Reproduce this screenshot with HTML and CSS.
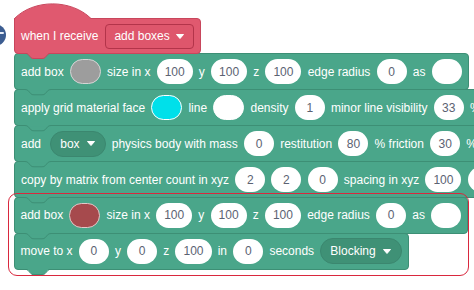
FILE: index.html
```html
<!DOCTYPE html>
<html lang="en">
<head>
    <meta charset="UTF-8">
    <title>Script</title>
    <link rel="stylesheet" href="styles.css">
</head>
<body>
    <div class="zoom-btn"><span class="dash"></span></div>

    <div class="script">
        <div class="hat">
            <svg class="hat-cap" width="78" height="17" viewBox="0 0 78 17">
                <path class="cap-fill" d="M0.5,17 L0.5,15.5 C20,-4 57,-4 77,15.5 L77,17 Z"/>
                <path class="cap-line" d="M0.5,17 L0.5,15.5 C20,-4 57,-4 77,15.5"/>
            </svg>
            <span>when I receive</span>
            <div class="hat-menu">add boxes <svg class="arrow" width="8" height="5" viewBox="0 0 8 5"><path d="M0.5,0.5 H7.5 L4,4.5 Z"/></svg></div>
            <svg class="tab red-tab" width="26" height="6" viewBox="0 0 26 6">
                <path class="tab-fill" d="M0,0 C1.5,0 2.5,0.4 3.2,1.2 L5.8,4.2 C6.5,5 7.5,5.4 9,5.4 H17 C18.5,5.4 19.5,5 20.2,4.2 L22.8,1.2 C23.5,0.4 24.5,0 26,0 Z"/>
                <path class="tab-line" d="M0,0.3 C1.5,0.3 2.5,0.7 3.2,1.5 L5.8,4.5 C6.5,5.3 7.5,5.5 9,5.5 H17 C18.5,5.5 19.5,5.3 20.2,4.5 L22.8,1.5 C23.5,0.7 24.5,0.3 26,0.3"/>
            </svg>
        </div>

        <div class="block">
            <span>add box</span>
            <span class="swatch gray"></span>
            <span>size in x</span>
            <span class="num">100</span>
            <span>y</span>
            <span class="num">100</span>
            <span>z</span>
            <span class="num">100</span>
            <span>edge radius</span>
            <span class="num">0</span>
            <span>as</span>
            <span class="num"></span>
        </div>

        <div class="block">
            <svg class="notch" width="26" height="7" viewBox="0 0 26 7"><rect class="notch-fill" x="0" y="0" width="26" height="1.2"/><path class="notch-line" d="M0,0.5 C1.5,0.5 2.5,0.9 3.2,1.7 L5.8,4.7 C6.5,5.5 7.5,5.8 9,5.8 H17 C18.5,5.8 19.5,5.5 20.2,4.7 L22.8,1.7 C23.5,0.9 24.5,0.5 26,0.5"/></svg>
            <span>apply grid material face</span>
            <span class="swatch cyan"></span>
            <span>line</span>
            <span class="swatch white"></span>
            <span>density</span>
            <span class="num">1</span>
            <span>minor line visibility</span>
            <span class="num">33</span>
            <span>%</span>
        </div>

        <div class="block">
            <svg class="notch" width="26" height="7" viewBox="0 0 26 7"><rect class="notch-fill" x="0" y="0" width="26" height="1.2"/><path class="notch-line" d="M0,0.5 C1.5,0.5 2.5,0.9 3.2,1.7 L5.8,4.7 C6.5,5.5 7.5,5.8 9,5.8 H17 C18.5,5.8 19.5,5.5 20.2,4.7 L22.8,1.7 C23.5,0.9 24.5,0.5 26,0.5"/></svg>
            <span>add</span>
            <div class="menu wide">box <svg class="arrow" width="8" height="5" viewBox="0 0 8 5"><path d="M0.5,0.5 H7.5 L4,4.5 Z"/></svg></div>
            <span>physics body with mass</span>
            <span class="num">0</span>
            <span>restitution</span>
            <span class="num">80</span>
            <span>% friction</span>
            <span class="num">30</span>
            <span>%</span>
        </div>

        <div class="block">
            <svg class="notch" width="26" height="7" viewBox="0 0 26 7"><rect class="notch-fill" x="0" y="0" width="26" height="1.2"/><path class="notch-line" d="M0,0.5 C1.5,0.5 2.5,0.9 3.2,1.7 L5.8,4.7 C6.5,5.5 7.5,5.8 9,5.8 H17 C18.5,5.8 19.5,5.5 20.2,4.7 L22.8,1.7 C23.5,0.9 24.5,0.5 26,0.5"/></svg>
            <span>copy by matrix from center count in xyz</span>
            <span class="num">2</span>
            <span class="num">2</span>
            <span class="num">0</span>
            <span>spacing in xyz</span>
            <span class="num">100</span>
            <span class="num"></span>
        </div>

        <div class="selected">
            <div class="block">
                <svg class="notch" width="26" height="7" viewBox="0 0 26 7"><rect class="notch-fill" x="0" y="0" width="26" height="1.2"/><path class="notch-line" d="M0,0.5 C1.5,0.5 2.5,0.9 3.2,1.7 L5.8,4.7 C6.5,5.5 7.5,5.8 9,5.8 H17 C18.5,5.8 19.5,5.5 20.2,4.7 L22.8,1.7 C23.5,0.9 24.5,0.5 26,0.5"/></svg>
                <span>add box</span>
                <span class="swatch maroon"></span>
                <span>size in x</span>
                <span class="num">100</span>
                <span>y</span>
                <span class="num">100</span>
                <span>z</span>
                <span class="num">100</span>
                <span>edge radius</span>
                <span class="num">0</span>
                <span>as</span>
                <span class="num"></span>
            </div>

            <div class="block">
                <svg class="notch" width="26" height="7" viewBox="0 0 26 7"><rect class="notch-fill" x="0" y="0" width="26" height="1.2"/><path class="notch-line" d="M0,0.5 C1.5,0.5 2.5,0.9 3.2,1.7 L5.8,4.7 C6.5,5.5 7.5,5.8 9,5.8 H17 C18.5,5.8 19.5,5.5 20.2,4.7 L22.8,1.7 C23.5,0.9 24.5,0.5 26,0.5"/></svg>
                <span>move to x</span>
                <span class="num">0</span>
                <span>y</span>
                <span class="num">0</span>
                <span>z</span>
                <span class="num">100</span>
                <span>in</span>
                <span class="num">0</span>
                <span>seconds</span>
                <div class="menu">Blocking <svg class="arrow" width="8" height="5" viewBox="0 0 8 5"><path d="M0.5,0.5 H7.5 L4,4.5 Z"/></svg></div>
                <svg class="tab green-tab" width="26" height="6" viewBox="0 0 26 6">
                    <path class="tab-fill" d="M0,0 C1.5,0 2.5,0.4 3.2,1.2 L5.8,4.2 C6.5,5 7.5,5.4 9,5.4 H17 C18.5,5.4 19.5,5 20.2,4.2 L22.8,1.2 C23.5,0.4 24.5,0 26,0 Z"/>
                    <path class="tab-line" d="M0,0.3 C1.5,0.3 2.5,0.7 3.2,1.5 L5.8,4.5 C6.5,5.3 7.5,5.5 9,5.5 H17 C18.5,5.5 19.5,5.3 20.2,4.5 L22.8,1.5 C23.5,0.7 24.5,0.3 26,0.3"/>
                </svg>
            </div>
        </div>
    </div>
</body>
</html>
```

FILE: styles.css
```css
body {
    margin: 0;
    background: #ffffff;
    font-family: 'Liberation Sans', Arial, sans-serif;
    font-size: 12px;
    overflow: hidden;
    height: 290px;
    position: relative;
}

.zoom-btn {
    position: absolute;
    left: -16px;
    top: 24px;
    width: 22px;
    height: 22px;
    border-radius: 50%;
    background: #3c5d91;
}

.dash {
    position: absolute;
    left: 14px;
    top: 8px;
    width: 6px;
    height: 2px;
    border-radius: 1px;
    background: #e8eef8;
}

.script {
    padding: 18px 0 0 14px;
}

/* event hat */
.hat {
    position: relative;
    z-index: 1;
    display: flex;
    align-items: center;
    gap: 7px;
    width: max-content;
    height: 36px;
    box-sizing: border-box;
    padding: 0 6px 0 6px;
    background: #e0596f;
    border: 1px solid #c8465c;
    border-radius: 0 4px 4px 4px;
    color: #ffffff;
}

.hat-cap {
    position: absolute;
    left: -1px;
    top: -16px;
}

.cap-fill {
    fill: #e0596f;
}

.cap-line {
    fill: none;
    stroke: #c8465c;
    stroke-width: 1;
}

.hat-menu {
    display: flex;
    align-items: center;
    gap: 6px;
    height: 25px;
    box-sizing: border-box;
    padding: 0 9px 0 8px;
    border: 1.5px solid #b3344a;
    border-radius: 4px;
    background: #de566c;
}

.arrow path {
    fill: #ffffff;
    stroke: #ffffff;
    stroke-width: 1;
    stroke-linejoin: round;
}

.tab {
    position: absolute;
    left: 10px;
    top: 100%;
}

.red-tab .tab-fill {
    fill: #e0596f;
}

.red-tab .tab-line {
    fill: none;
    stroke: #c8465c;
}

/* stack blocks */
.block {
    position: relative;
    display: flex;
    align-items: center;
    gap: 6.2px;
    width: max-content;
    height: 37px;
    box-sizing: border-box;
    margin-top: -1px;
    padding: 0 6px 0 6px;
    background: #4aa68a;
    border: 1px solid #3d8f75;
    border-radius: 4px;
    color: #ffffff;
    white-space: nowrap;
}

.notch {
    position: absolute;
    left: 10px;
    top: -1px;
}

.notch-fill {
    fill: #4aa68a;
}

.notch-line {
    fill: none;
    stroke: #3d8f75;
    stroke-width: 1;
}

.green-tab .tab-fill {
    fill: #4aa68a;
}

.green-tab .tab-line {
    fill: none;
    stroke: #3d8f75;
}

.num {
    display: inline-flex;
    align-items: center;
    justify-content: center;
    min-width: 30px;
    height: 25px;
    box-sizing: border-box;
    padding: 0 8px;
    border-radius: 13px;
    background: #ffffff;
    color: #5b6272;
}

.swatch {
    display: inline-block;
    width: 31px;
    height: 25px;
    box-sizing: border-box;
    border-radius: 13px;
    border: 1.5px solid #ffffff;
}

.swatch.gray {
    background: #9d9d9d;
    border-color: #d6d6d6;
}

.swatch.cyan {
    background: #00e0ea;
    border-color: #ffffff;
}

.swatch.white {
    background: #ffffff;
}

.swatch.maroon {
    background: #a64a4d;
    border-color: #e2c9c9;
}

.menu {
    display: flex;
    align-items: center;
    gap: 7px;
    height: 26px;
    box-sizing: border-box;
    padding: 0 10px 0 9px;
    border-radius: 13px;
    background: #3f9176;
    border: 1px solid #3b876f;
}

.menu.wide {
    margin-left: 3px;
}

/* selection outline around the last two blocks */
.selected {
    position: relative;
    width: max-content;
    margin: -5px 0 0 -6px;
    padding: 3.5px 0 5px 4.5px;
    border: 1.5px solid #d9283e;
    border-radius: 9px;
}
```
